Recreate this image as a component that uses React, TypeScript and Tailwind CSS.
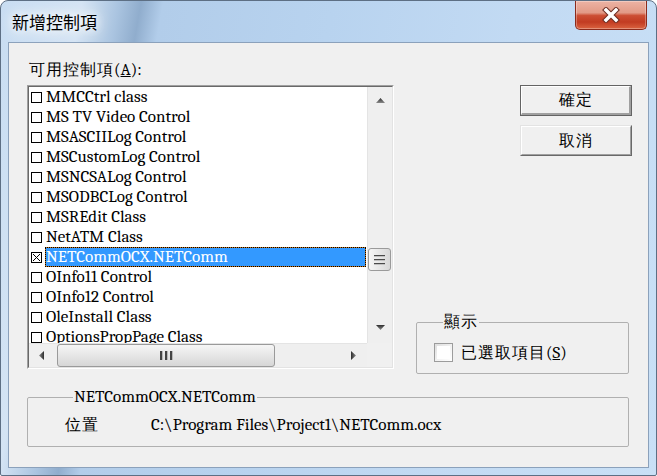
const items = [
  "MMCCtrl class",
  "MS TV Video Control",
  "MSASCIILog Control",
  "MSCustomLog Control",
  "MSNCSALog Control",
  "MSODBCLog Control",
  "MSREdit Class",
  "NetATM Class",
  "NETCommOCX.NETComm",
  "OInfo11 Control",
  "OInfo12 Control",
  "OleInstall Class",
  "OptionsPropPage Class",
];

const Box = ({ checked }: { checked?: boolean }) => (
  <svg width="11" height="11" viewBox="0 0 11 11" className="shrink-0">
    <rect x="0.5" y="0.5" width="10" height="10" fill="none" stroke="#000" />
    {checked && <path d="M2 2L9 9M9 2L2 9" stroke="#000" />}
  </svg>
);

const Arrow = ({ dir }: { dir: "up" | "down" | "left" | "right" }) => {
  const vertical = dir === "up" || dir === "down";
  const pts = {
    up: "0,5 4.5,0 9,5",
    down: "0,0 9,0 4.5,5",
    left: "5,0 5,9 0,4.5",
    right: "0,0 5,4.5 0,9",
  }[dir];
  return (
    <svg width={vertical ? 9 : 5} height={vertical ? 5 : 9} viewBox={vertical ? "0 0 9 5" : "0 0 5 9"}>
      <defs>
        <linearGradient id={`ar-${dir}`} x1="0" y1="0" x2={vertical ? "0" : "1"} y2={vertical ? "1" : "0"}>
          <stop offset="0" stopColor={dir === "left" ? "#8a8a8a" : "#2e2e2e"} />
          <stop offset="1" stopColor={dir === "left" ? "#2e2e2e" : "#8a8a8a"} />
        </linearGradient>
      </defs>
      <polygon points={pts} fill={`url(#ar-${dir})`} />
    </svg>
  );
};

const Cjk = ({ children }: { children: React.ReactNode }) => (
  <span className="text-[16px] tracking-[1px]">{children}</span>
);

export default function App() {
  return (
    <div className="w-[657px] h-[476px] overflow-hidden rounded-t-[8px] rounded-b-[2px] border border-[#5d6f84] bg-[linear-gradient(100deg,#c8ddf2_0%,#d4e4f4_11%,#aac4e0_16%,#90adcd_19%,#b2cdea_22%,#b8d3ef_45%,#c2daf3_70%,#c9e0f6_100%)] font-serif [font-family:Liberation_Serif,Noto_Sans_CJK_TC,serif] text-black">
      {/* title bar */}
      <div className="flex h-[41px] items-start">
        <div className="flex h-[41px] flex-1 items-center pl-[11px] [font-family:Noto_Sans_CJK_TC,sans-serif] text-[17px] [text-shadow:0_0_8px_#fff,0_0_14px_#fff,0_0_20px_rgba(255,255,255,0.8)]">
          新增控制項
        </div>
        <div className="mr-[9px] flex h-[29px] w-[72px] items-center justify-center rounded-b-[5px] border border-t-0 border-[#8b2b1c] bg-[linear-gradient(180deg,#ecb3a4_0%,#e29a86_42%,#cc4f34_52%,#c23c22_75%,#da6340_100%)] shadow-[inset_0_0_0_1px_rgba(255,255,255,0.3)]">
          <svg width="20" height="16" viewBox="0 0 20 16">
            <path d="M5 3L15 13M15 3L5 13" stroke="#6b2a1f" strokeWidth="5.5" strokeLinecap="square" />
            <path d="M5 3L15 13M15 3L5 13" stroke="#fff" strokeWidth="3.5" strokeLinecap="square" />
          </svg>
        </div>
      </div>

      {/* client area */}
      <div className="mx-[7px] h-[426px] border border-[#8ba1bb] bg-[#f0f0f0] pl-[18px]">
        <div className="flex">
          <div className="w-[367px] pt-[18px]">
            <div className="pl-[2px] leading-[18px]">
              <Cjk>可用控制項</Cjk>
              <span className="text-[17px]">
                (<span className="underline">A</span>):
              </span>
            </div>

            {/* list box */}
            <div className="mt-[6px] border border-[#a0a0a0] border-r-white border-b-white">
              <div className="border border-[#696969] border-r-[#e3e3e3] border-b-[#e3e3e3] bg-white">
                <div className="flex h-[256px]">
                  <div className="w-[338px] overflow-hidden">
                    {items.map((it) => {
                      const sel = it === "NETCommOCX.NETComm";
                      return (
                        <div key={it} className="flex h-[20px] items-center pl-[2px] text-[17px] whitespace-nowrap">
                          <Box checked={sel} />
                          {sel ? (
                            <div className="ml-[3px] mr-[1px] h-[20px] flex-1 border border-dotted border-black bg-[#c8781e]">
                              <div className="h-full bg-[#3399ff] leading-[18px] text-white">{it}</div>
                            </div>
                          ) : (
                            <div className="ml-[3px] flex-1 pl-[1px] leading-[20px]">{it}</div>
                          )}
                        </div>
                      );
                    })}
                  </div>
                  {/* vertical scrollbar */}
                  <div className="flex w-[25px] flex-col border-l border-[#e4e4e4] bg-[#efefef]">
                    <div className="flex h-[26px] items-center justify-center pl-[1px]">
                      <Arrow dir="up" />
                    </div>
                    <div className="flex-1">
                      <div className="mt-[135px] flex h-[23px] w-[23px] flex-col items-center justify-center gap-[2px] rounded-[3px] border border-[#9a9a9a] bg-gradient-to-r from-[#f6f6f6] to-[#d8d8d8]">
                        <span className="h-[2px] w-[11px] bg-[linear-gradient(180deg,#4a4a4a_50%,#c0c0c0_50%)]" />
                        <span className="h-[2px] w-[11px] bg-[linear-gradient(180deg,#4a4a4a_50%,#c0c0c0_50%)]" />
                        <span className="h-[2px] w-[11px] bg-[linear-gradient(180deg,#4a4a4a_50%,#c0c0c0_50%)]" />
                      </div>
                    </div>
                    <div className="flex h-[26px] items-center justify-center pb-[5px] pl-[1px]">
                      <Arrow dir="down" />
                    </div>
                  </div>
                </div>
                {/* horizontal scrollbar */}
                <div className="flex h-[24px]">
                  <div className="flex w-[338px] border-t border-[#e4e4e4] bg-[#efefef]">
                    <div className="flex w-[27px] items-center pl-[10px]">
                      <Arrow dir="left" />
                    </div>
                    <div className="flex-1">
                      <div className="ml-[1px] flex h-[23px] w-[218px] items-center justify-center gap-[2px] rounded-[3px] border border-[#9a9a9a] bg-gradient-to-b from-[#f6f6f6] to-[#d6d6d6]">
                        <span className="h-[9px] w-[3px] bg-[linear-gradient(90deg,#444_66%,#b8b8b8_66%)]" />
                        <span className="h-[9px] w-[3px] bg-[linear-gradient(90deg,#444_66%,#b8b8b8_66%)]" />
                        <span className="h-[9px] w-[3px] bg-[linear-gradient(90deg,#444_66%,#b8b8b8_66%)]" />
                      </div>
                    </div>
                    <div className="flex w-[27px] items-center justify-center">
                      <Arrow dir="right" />
                    </div>
                  </div>
                  <div className="w-[25px] bg-[#f0f0f0]" />
                </div>
              </div>
            </div>
          </div>

          {/* right column */}
          <div className="ml-[22px] flex w-[216px] flex-col items-end pt-[42px]">
            <div className="h-[31px] w-[112px] border border-[#646464] bg-[#f0f0f0]">
              <div className="flex h-full items-center justify-center border border-white border-r-2 border-b-2 border-r-[#a0a0a0] border-b-[#a0a0a0]">
                <Cjk>確定</Cjk>
              </div>
            </div>
            <div className="mt-[9px] h-[31px] w-[112px] border border-[#e3e3e3] border-r-[#696969] border-b-[#696969] bg-[#f0f0f0]">
              <div className="flex h-full items-center justify-center border border-white border-r-[#a0a0a0] border-b-[#a0a0a0]">
                <Cjk>取消</Cjk>
              </div>
            </div>

            <fieldset className="mt-[157px] w-[213px] self-start rounded-[2px] border border-[#b0b0b0] pb-[11px] pl-[17px] pt-[12px]">
              <legend className="ml-[9px] px-[1px] leading-[18px]">
                <Cjk>顯示</Cjk>
              </legend>
              <div className="flex h-[19px] items-center">
                <div className="h-[19px] w-[19px] border border-[#9c9c9c] bg-[linear-gradient(135deg,#dedede,#f4f4f4_60%,#ffffff)] p-[2px]">
                  <div className="h-full w-full bg-white" />
                </div>
                <div className="ml-[8px] leading-[18px]">
                  <Cjk>已選取項目</Cjk>
                  <span className="text-[17px]">
                    (<span className="underline">S</span>)
                  </span>
                </div>
              </div>
            </fieldset>
          </div>
        </div>

        {/* bottom group */}
        <fieldset className="mt-[14px] w-[602px] rounded-[2px] border border-[#b0b0b0] pb-[11px] pt-[9px] pl-[37px]">
          <legend className="ml-[8px] px-[1px] text-[17px] leading-[18px]">NETCommOCX.NETComm</legend>
          <div className="flex h-[20px] items-center">
            <span className="w-[86px]">
              <Cjk>位置</Cjk>
            </span>
            <span className="text-[17px]">C:\Program Files\Project1\NETComm.ocx</span>
          </div>
        </fieldset>
      </div>
    </div>
  );
}
